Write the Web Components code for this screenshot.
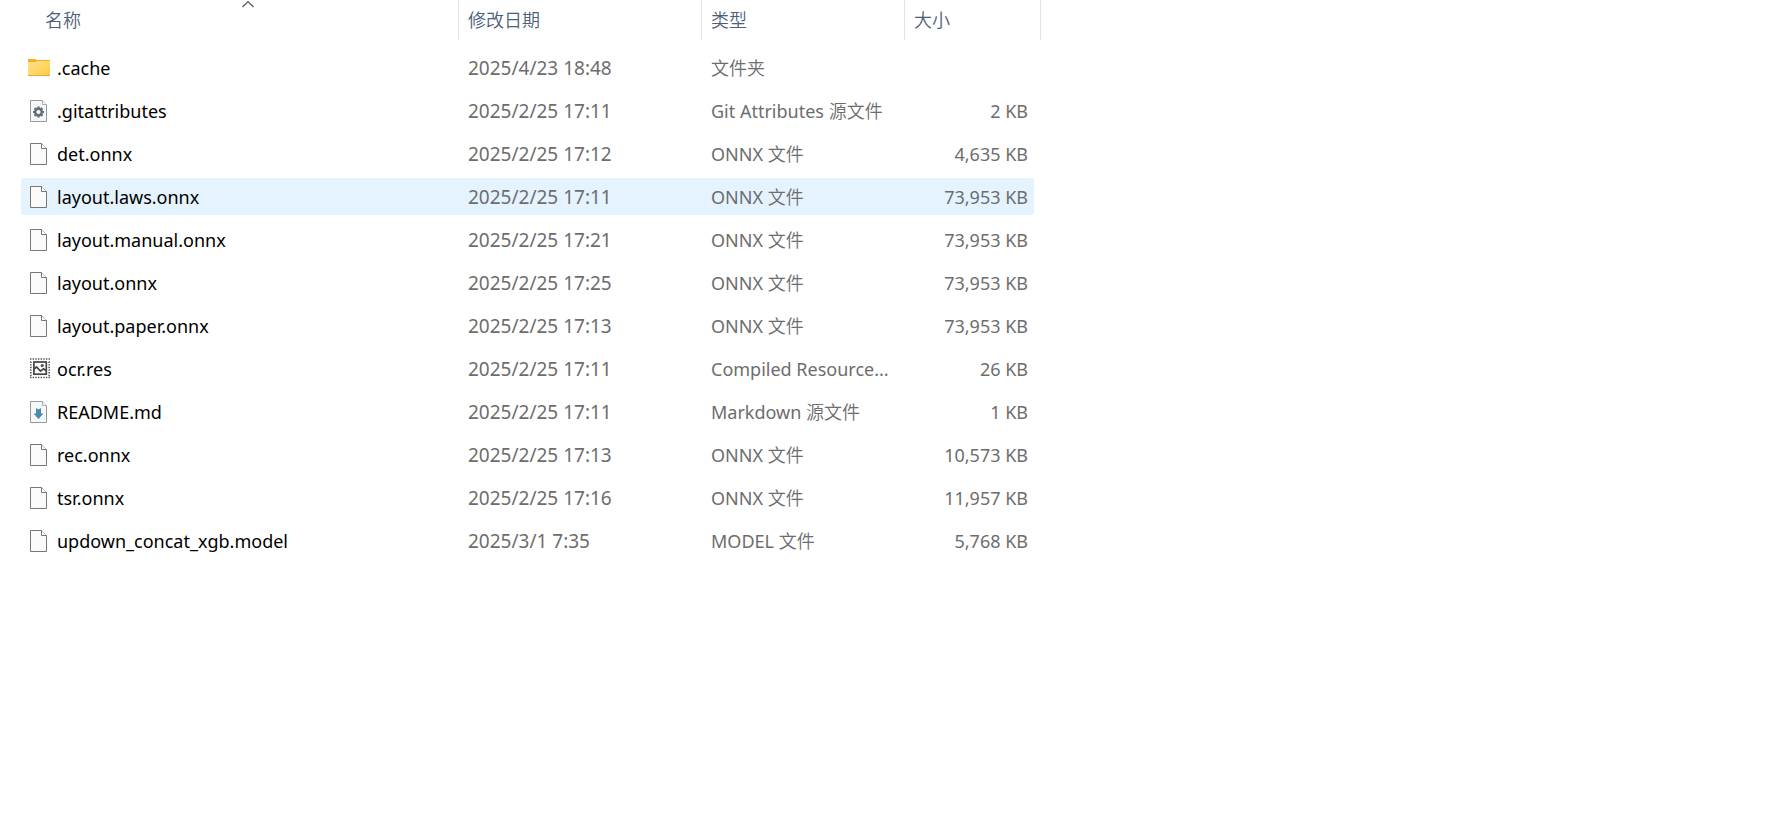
<!DOCTYPE html>
<html lang="zh-CN">
<head>
<meta charset="utf-8">
<title>文件</title>
<style>
body { margin: 0; background: #fff; font-family: "Noto Sans", "Noto Sans CJK SC DemiLight", "Noto Sans CJK SC", sans-serif; }
</style>
</head>
<body>
<file-explorer></file-explorer>

<template id="icon-folder">
<svg viewBox="0 -1 24 25" aria-hidden="true">
  <defs><linearGradient id="g" x1="0" y1="0" x2="1" y2="1"><stop offset="0" stop-color="#ffe394"/><stop offset="1" stop-color="#ffca3a"/></linearGradient></defs>
  <path d="M1 3h8v1h14v3H1z" fill="#f5b01c"/>
  <path d="M1 6h8l1-1h13v15H1z" fill="url(#g)"/>
  <path d="M1 19h22v1H1z" fill="#e9a93a"/>
</svg>
</template>
<template id="icon-file">
<svg viewBox="0 -1 24 25" aria-hidden="true">
  <path d="M3.500 1.500h11l5 5v16h-16z" fill="#fafafa" stroke="#777"/>
  <path d="M14.500 1.500v5h5" fill="#fff" stroke="#777"/>
</svg>
</template>
<template id="icon-gear">
<svg viewBox="0 -1 24 25" aria-hidden="true">
  <path d="M3.500 1.500h12l4 4v17h-16z" fill="#f7f8f9" stroke="#999"/>
  <path d="M15.500 1.500v4h4" fill="#fff" stroke="#aaa"/>
  <circle cx="11.500" cy="13" r="3.300" fill="none" stroke="#5d707b" stroke-width="2.400"/>
  <path d="M11.500 7.500v2M11.500 16.500v2M6 13h2M15 13h2M7.600 9.100l1.500 1.500M13.900 15.400l1.500 1.500M7.600 16.900l1.500-1.500M13.900 10.600l1.500-1.500" stroke="#5d707b" stroke-width="2.200"/>
</svg>
</template>
<template id="icon-markdown">
<svg viewBox="0 -1 24 25" aria-hidden="true">
  <path d="M3.500 1.500h12l4 4v17h-16z" fill="#f4f8fa" stroke="#999"/>
  <path d="M15.500 1.500v4h4" fill="#fff" stroke="#aaa"/>
  <path d="M9 8l2.500 1.500L14 8v5.500h2.500l-5 5.500-5-5.500H9z" fill="#4a8aaa"/>
</svg>
</template>
<template id="icon-resource">
<svg viewBox="0 -1 24 25" aria-hidden="true">
  <path d="M3 2h20M3 20.500h20" stroke="#555" stroke-width="1.600" stroke-dasharray="1.400 1.250"/>
  <path d="M3.800 4.500v15M22.200 4.500v15" stroke="#555" stroke-width="1.600" stroke-dasharray="1.400 1.250"/>
  <rect x="6.900" y="5" width="12.400" height="12.200" fill="#fff" stroke="#444" stroke-width="1.700"/>
  <circle cx="15.200" cy="8.600" r="1.600" fill="#555"/>
  <path d="M7 12l2.500-2 4 4.200 3-2.400 2.500 1.700" fill="none" stroke="#444" stroke-width="1.700"/>
</svg>
</template>

<template id="explorer">
<style>
:host { display: block; padding-left: 21px; }
table { table-layout: fixed; width: 1013px; margin-top: -6px; border-collapse: separate; border-spacing: 0 6px; color: #6d6d6d; font-size: 18px; line-height: 24px; }
.name { width: 438px; }
.date { width: 243px; }
.type { width: 203px; }
.size { width: 129px; }
th, td { padding: 0; text-align: left; font-weight: 400; vertical-align: top; }
thead th { height: 43px; }
tbody td, tbody th { height: 37px; vertical-align: middle; padding-left: 9px; white-space: nowrap; }
tbody th { padding-left: 6px; color: #000; border-radius: 3px 0 0 3px; }
tbody td:nth-child(2) { font-size: 19px; }
tbody td:last-child { text-align: right; padding: 0 6px 0 0; border-radius: 0 3px 3px 0; }
tr.active > * { background: #e5f3ff; }
th:last-child column-header { margin-right: -7px; }
</style>
<table>
  <colgroup><col class="name"><col class="date"><col class="type"><col class="size"></colgroup>
  <thead><tr>
    <th scope="col" aria-sort="ascending"><column-header sorted>名称</column-header></th>
    <th scope="col"><column-header>修改日期</column-header></th>
    <th scope="col"><column-header>类型</column-header></th>
    <th scope="col"><column-header>大小</column-header></th>
  </tr></thead>
  <tbody></tbody>
</table>
</template>

<script>
class ColumnHeader extends HTMLElement {
  constructor() {
    super();
    this.attachShadow({ mode: 'open' }).innerHTML = `
<style>
:host { display: block; height: 40px; border-right: 1px solid #e2e2e2; color: #4c607a; }
button { position: relative; display: block; width: 100%; height: 100%; margin: 0; padding: 0 9px; border: 0; background: none; color: inherit; font: inherit; text-align: left; }
:host([sorted]) button { padding-left: 24px; }
svg { display: none; position: absolute; top: 0; left: 50%; width: 14px; height: 8px; margin-left: 1px; }
:host([sorted]) svg { display: block; }
</style>
<button type="button"><slot></slot><svg viewBox="0 0 14 8" aria-hidden="true"><path d="M1.500 7L7 1.500 12.500 7" fill="none" stroke="#555" stroke-width="1.200"/></svg></button>`;
  }
}
customElements.define('column-header', ColumnHeader);

class FileName extends HTMLElement {
  constructor() {
    super();
    this.attachShadow({ mode: 'open' }).innerHTML = `
<style>
:host { display: flex; align-items: center; gap: 6px; }
svg { display: block; width: 24px; height: 25px; }
</style>
<span part="icon"></span><span><slot></slot></span>`;
  }
  connectedCallback() {
    const icon = document.getElementById('icon-' + this.getAttribute('kind'));
    this.shadowRoot.querySelector('[part=icon]').replaceChildren(icon.content.cloneNode(true));
  }
}
customElements.define('file-name', FileName);

const FILES = [
  ['folder', '.cache', '2025/4/23 18:48', '文件夹', ''],
  ['gear', '.gitattributes', '2025/2/25 17:11', 'Git Attributes 源文件', '2 KB'],
  ['file', 'det.onnx', '2025/2/25 17:12', 'ONNX 文件', '4,635 KB'],
  ['file', 'layout.laws.onnx', '2025/2/25 17:11', 'ONNX 文件', '73,953 KB'],
  ['file', 'layout.manual.onnx', '2025/2/25 17:21', 'ONNX 文件', '73,953 KB'],
  ['file', 'layout.onnx', '2025/2/25 17:25', 'ONNX 文件', '73,953 KB'],
  ['file', 'layout.paper.onnx', '2025/2/25 17:13', 'ONNX 文件', '73,953 KB'],
  ['resource', 'ocr.res', '2025/2/25 17:11', 'Compiled Resource...', '26 KB'],
  ['markdown', 'README.md', '2025/2/25 17:11', 'Markdown 源文件', '1 KB'],
  ['file', 'rec.onnx', '2025/2/25 17:13', 'ONNX 文件', '10,573 KB'],
  ['file', 'tsr.onnx', '2025/2/25 17:16', 'ONNX 文件', '11,957 KB'],
  ['file', 'updown_concat_xgb.model', '2025/3/1 7:35', 'MODEL 文件', '5,768 KB'],
];
const ACTIVE = 'layout.laws.onnx';

class FileExplorer extends HTMLElement {
  constructor() {
    super();
    const root = this.attachShadow({ mode: 'open' });
    root.append(document.getElementById('explorer').content.cloneNode(true));
    root.querySelector('tbody').innerHTML = FILES.map(([kind, name, date, type, size]) => `
      <tr${name === ACTIVE ? ' class="active"' : ''}>
        <th scope="row"><file-name kind="${kind}">${name}</file-name></th>
        <td>${date}</td><td>${type}</td><td>${size}</td>
      </tr>`).join('');
  }
}
customElements.define('file-explorer', FileExplorer);
</script>
</body>
</html>
